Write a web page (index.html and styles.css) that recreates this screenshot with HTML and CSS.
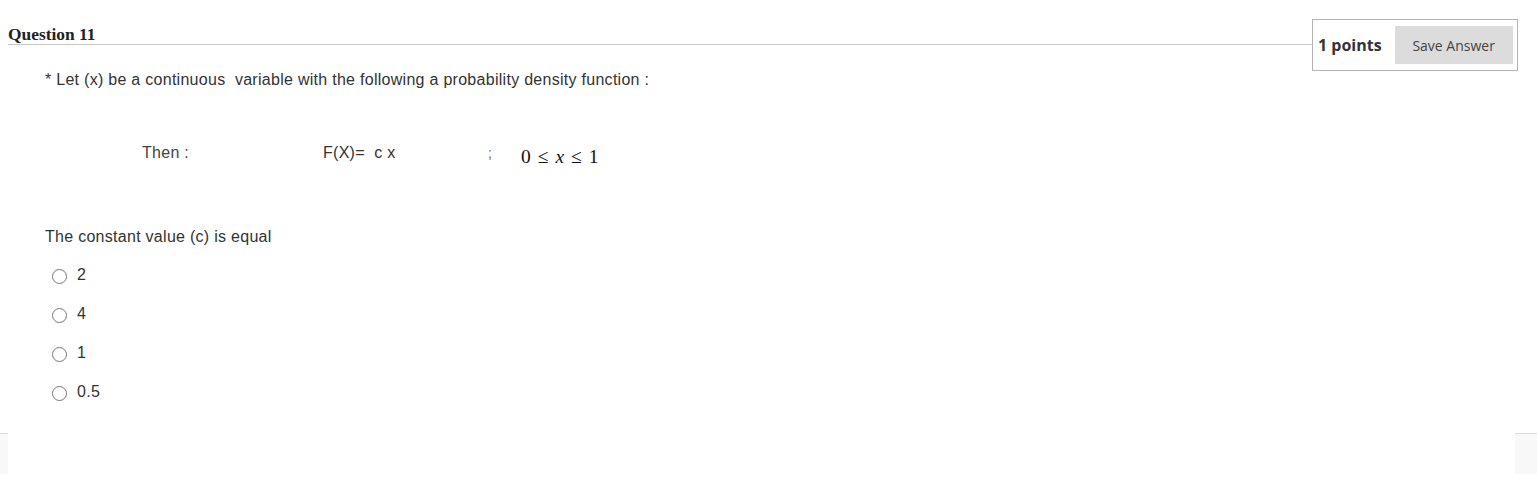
FILE: index.html
```html
<!DOCTYPE html>
<html>
<head>
<meta charset="utf-8">
<link rel="stylesheet" href="styles.css">
</head>
<body>
<div class="question">
  <div class="header">
    <h2 class="title">Question 11</h2>
    <div class="points-box">
      <span class="points">1 points</span>
      <button class="save">Save Answer</button>
    </div>
  </div>
  <div class="body">
    <p class="stem">* Let (x) be a continuous &nbsp;variable with the following a probability density function :</p>
    <div class="formula">
      <span class="then">Then :</span>
      <span class="fx">F(X)= &nbsp;c x</span>
      <span class="semi">;</span>
      <span class="math">0 ≤ <i>x</i> ≤ 1</span>
    </div>
    <p class="prompt">The constant value (c) is equal</p>
    <ul class="options">
      <li class="option"><span class="radio"></span><span class="label">2</span></li>
      <li class="option"><span class="radio"></span><span class="label">4</span></li>
      <li class="option"><span class="radio"></span><span class="label">1</span></li>
      <li class="option"><span class="radio"></span><span class="label">0.5</span></li>
    </ul>
  </div>
</div>
<div class="next">
  <div class="next-inner"></div>
</div>
</body>
</html>
```
FILE: styles.css
```css
html, body {
  margin: 0;
  padding: 0;
  background: #fff;
}
body {
  font-family: "Liberation Sans", Arial, sans-serif;
  color: #333;
}
.header {
  display: flex;
  align-items: flex-start;
  padding: 19px 19px 0 8px;
}
.title {
  flex: 1;
  margin: 0;
  padding-top: 5px;
  height: 20px;
  line-height: 20px;
  font-family: "Liberation Serif", "Times New Roman", serif;
  font-size: 17.4px;
  font-weight: bold;
  color: #222;
  border-bottom: 1px solid #c8c8c8;
}
.points-box {
  display: flex;
  align-items: center;
  gap: 13px;
  width: 194px;
  height: 38px;
  padding: 6px 5px;
  border: 1px solid #b4b4b4;
  background: #fff;
}
.points {
  font-family: "Open Sans", sans-serif;
  font-size: 16px;
  font-weight: bold;
  color: #333;
  white-space: nowrap;
}
.save {
  flex-shrink: 0;
  height: 38px;
  width: 118px;
  border: none;
  background: #dcdcdc;
  font-family: "Open Sans", sans-serif;
  font-size: 14px;
  color: #444;
  padding: 0;
  white-space: nowrap;
}
.body {
  padding-left: 45px;
  letter-spacing: 0.28px;
}
.stem {
  margin: 0;
  font-size: 16px;
  line-height: 18px;
  color: #333;
}
.formula {
  display: flex;
  align-items: flex-start;
  margin-top: 55px;
  font-size: 16px;
  line-height: 18px;
  color: #444;
}
.then {
  margin-left: 97px;
  width: 181px;
}
.fx {
  width: 165px;
  color: #333;
}
.semi {
  width: 33px;
  color: #666;
  font-size: 14px;
}
.math {
  padding-top: 4px;
  font-family: "Liberation Serif", "Times New Roman", serif;
  font-size: 19.5px;
  line-height: 18px;
  color: #111;
  letter-spacing: 0.3px;
  word-spacing: 1.5px;
  white-space: nowrap;
}
.prompt {
  margin: 62px 0 0 0;
  font-size: 16px;
  line-height: 18px;
  color: #333;
}
.options {
  list-style: none;
  margin: 20px 0 0 0;
  padding: 0;
  display: flex;
  flex-direction: column;
  gap: 21px;
}
.option {
  display: flex;
  align-items: flex-start;
  gap: 10px;
  padding-left: 7px;
  font-size: 16px;
  line-height: 18px;
  color: #333;
}
.radio {
  margin-top: 3px;
  width: 13px;
  height: 13px;
  border: 1px solid #777;
  border-radius: 50%;
  box-sizing: content-box;
}
.next {
  margin-top: 32px;
  height: 40px;
  border-top: 1px solid #dcdcdc;
  background: #f8f8f8;
  padding: 0 22px 0 8px;
}
.next-inner {
  height: 41px;
  margin-top: -1px;
  background: #fff;
}
```
